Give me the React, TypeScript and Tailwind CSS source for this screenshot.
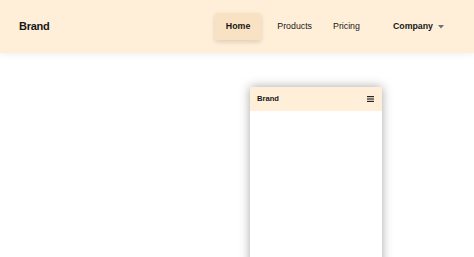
import React from 'react';

const font = { fontFamily: '"Liberation Sans", Arial, sans-serif' };

const Caret = () => (
  <svg width="6" height="4" viewBox="0 0 6 4" className="ml-[5px] text-gray-500">
    <path d="M0 0 L6 0 L3 3.5 Z" fill="currentColor" />
  </svg>
);

const Burger = () => (
  <svg width="7" height="6" viewBox="0 0 7 6" className="text-neutral-800">
    <rect x="0" y="0" width="7" height="1.2" fill="currentColor" />
    <rect x="0" y="2.4" width="7" height="1.2" fill="currentColor" />
    <rect x="0" y="4.8" width="7" height="1.2" fill="currentColor" />
  </svg>
);

export default function App() {
  return (
    <div className="w-[474px] h-[257px] overflow-hidden bg-white text-neutral-900" style={font}>
      {/* Top navbar */}
      <header className="relative z-10 h-[53px] bg-[#ffefd8] flex items-center pl-[19px] pr-[30px] shadow-[0_2px_6px_rgba(0,0,0,0.06)]">
        <div className="text-[11px] font-bold tracking-tight">Brand</div>
        <nav className="ml-auto flex items-center text-[8.8px]">
          <div className="h-[27px] px-[11px] flex items-center rounded-[2px] bg-[#f9e1c4] font-bold shadow-[0_2px_5px_rgba(0,0,0,0.14)]">
            Home
          </div>
          <div className="ml-[16px]">Products</div>
          <div className="ml-[21px]">Pricing</div>
          <div className="ml-[33px] flex items-center font-bold">
            Company
            <Caret />
          </div>
        </nav>
      </header>

      {/* Mobile preview */}
      <main className="pt-[34px] pl-[250px]">
        <div className="w-[132px] h-[220px] bg-white shadow-[0_0_10px_rgba(0,0,0,0.35)]">
          <div className="h-[24px] bg-[#ffefd8] flex items-center justify-between pl-[7px] pr-[8px]">
            <span className="text-[7.6px] font-bold">Brand</span>
            <Burger />
          </div>
        </div>
      </main>
    </div>
  );
}
